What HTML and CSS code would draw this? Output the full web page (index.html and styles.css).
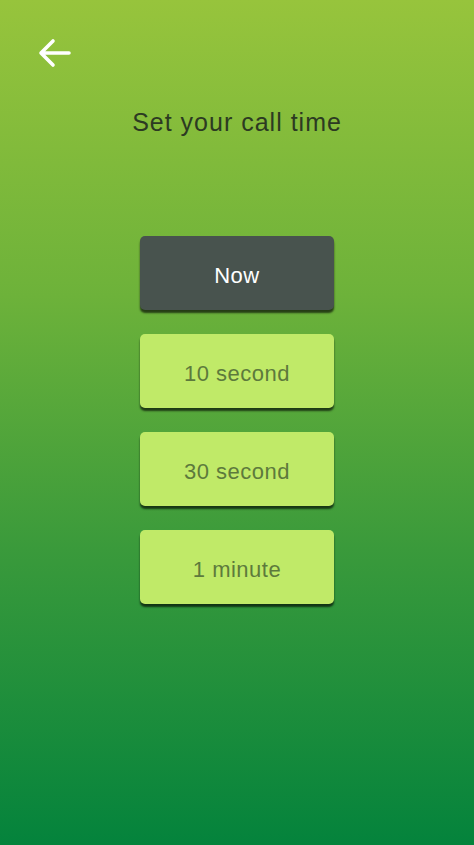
FILE: index.html
```html
<!DOCTYPE html>
<html lang="en">
<head>
    <meta charset="UTF-8">
    <meta name="viewport" content="width=device-width, initial-scale=1.0">
    <title>Set your call time</title>
    <link rel="stylesheet" href="styles.css">
</head>
<body>
    <div class="screen">
        <header class="top-bar">
            <button class="back-button" aria-label="Back">
                <svg width="34" height="30" viewBox="0 0 34 30">
                    <path d="M32 15H4M16 3L4 15l12 12" fill="none" stroke="#ffffff" stroke-width="3.6" stroke-linecap="round" stroke-linejoin="round"/>
                </svg>
            </button>
        </header>

        <h1 class="title">Set your call time</h1>

        <!-- Time options -->
        <div class="options">
            <button class="option option-active">Now</button>
            <button class="option">10 second</button>
            <button class="option">30 second</button>
            <button class="option">1 minute</button>
        </div>
    </div>
</body>
</html>
```

FILE: styles.css
```css
html, body {
    margin: 0;
    padding: 0;
}

body {
    font-family: "Liberation Sans", Arial, sans-serif;
    min-height: 845px;
    background: linear-gradient(to bottom, #97c43c 0%, #6db23a 35%, #3a9a3b 65%, #04833c 100%);
}

.screen {
    display: flex;
    flex-direction: column;
    align-items: center;
}

.top-bar {
    align-self: stretch;
    padding: 38px 0 0 37px;
    height: 34px;
}

.back-button {
    background: none;
    border: none;
    padding: 0;
    cursor: pointer;
}

.title {
    margin: 36px 0 0 0;
    font-size: 25px;
    font-weight: 400;
    color: #2c3a22;
    letter-spacing: 1px;
}

.options {
    display: flex;
    flex-direction: column;
    gap: 24px;
    margin-top: 99px;
}

.option {
    width: 194px;
    height: 74px;
    padding: 5px 0 0 0;
    border: none;
    border-radius: 5px;
    background-color: #c0ea68;
    color: #5d7a3c;
    font-family: "Liberation Sans", Arial, sans-serif;
    font-size: 22px;
    letter-spacing: 0.5px;
    box-shadow: 0 3px 2px rgba(0, 0, 0, 0.65);
    cursor: pointer;
}

.option-active {
    background-color: #48534e;
    color: #ffffff;
}
```
